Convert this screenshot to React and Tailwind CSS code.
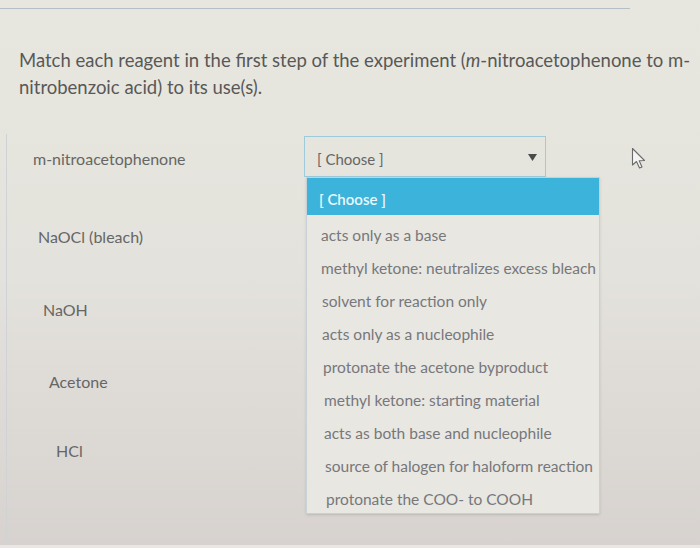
export default function App() {
  const labels = [
    { t: "m-nitroacetophenone", h: "h-[78px]", pl: "pl-[32px]" },
    { t: "NaOCl (bleach)", h: "h-[73px]", pl: "pl-[37px]" },
    { t: "NaOH", h: "h-[72px]", pl: "pl-[42px]" },
    { t: "Acetone", h: "h-[69px]", pl: "pl-[48px]" },
    { t: "HCl", h: "h-[69px]", pl: "pl-[55px]" },
  ];
  const options = [
    { t: "acts only as a base", pl: "pl-[14px]" },
    { t: "methyl ketone: neutralizes excess bleach", pl: "pl-[14px]" },
    { t: "solvent for reaction only", pl: "pl-[15px]" },
    { t: "acts only as a nucleophile", pl: "pl-[15px]" },
    { t: "protonate the acetone byproduct", pl: "pl-[16px]" },
    { t: "methyl ketone: starting material", pl: "pl-[17px]" },
    { t: "acts as both base and nucleophile", pl: "pl-[17px]" },
    { t: "source of halogen for haloform reaction", pl: "pl-[18px]" },
    { t: "protonate the COO- to COOH", pl: "pl-[19px]" },
  ];
  return (
    <div
      className="relative w-[700px] h-[548px] overflow-hidden bg-linear-to-b from-[#e7e7df] via-[#e4e2dc] to-[#d7d2cf] text-[#5e5e5e]"
      style={{ fontFamily: "Lato, 'Open Sans', sans-serif" }}
    >
      <div className="h-[8px]" />
      <div className="w-[630px] border-t border-[#b4bfc8]" />
      <div className="pt-[38px] pl-[19px] text-[18.5px] leading-[27px] text-[#585858] whitespace-nowrap">
        <div>
          Match each reagent in the first step of the experiment (<i>m</i>-nitroacetophenone to m-
        </div>
        <div>nitrobenzoic acid) to its use(s).</div>
      </div>

      <div className="mt-[33px] flex border-l border-[#cfd3d5] ml-[6px] h-[420px]">
        <div className="w-[297px] flex flex-col pt-[14px] text-[16px] text-[#666]">
          {labels.map((l, i) => (
            <div key={i} className={`${l.h} ${l.pl} -ml-[6px] flex items-start`}>
              <span className="leading-[22px]">{l.t}</span>
            </div>
          ))}
        </div>
        <div className="relative pt-[2px]">
          <div className="w-[242px] h-[41px] border border-[#9ecbdc] flex items-center justify-between pl-[12px] pr-[8px] pt-[6px] text-[15px] text-[#666]">
            <span>[ Choose ]</span>
            <svg width="9" height="7" viewBox="0 0 9 7" className="-mt-[4px]">
              <path d="M0 0 L9 0 L4.5 7 Z" fill="#4a4a4a" />
            </svg>
          </div>
          <div className="absolute left-[2px] top-[43px] w-[294px] h-[337px] border border-[#c8d1d8] bg-[#e8e7e1] shadow-sm">
            <div className="h-[37px] bg-[#3cb3da] flex items-center pl-[12px] pt-[5px] text-[15px] font-semibold text-[#eaf8fd]">
              [ Choose ]
            </div>
            <div className="pt-[4px] text-[15.5px] text-[#77777c]">
              {options.map((o, i) => (
                <div key={i} className={`h-[33px] flex items-center ${o.pl} whitespace-nowrap`}>
                  {o.t}
                </div>
              ))}
            </div>
          </div>
        </div>
      </div>

      <svg className="absolute left-[631px] top-[147px]" width="18" height="24" viewBox="0 0 18 24">
        <path
          d="M1.5 1.5 L1.5 18 L5.5 14.5 L8.5 21 L11 20 L8.2 13.8 L13.5 13.5 Z"
          fill="#f4f4f2"
          stroke="#6a6a6a"
          strokeWidth="1.1"
          strokeLinejoin="round"
        />
      </svg>

      <div className="absolute left-0 bottom-0 w-full h-[3px] bg-[#ebe6e4]" />
    </div>
  );
}
